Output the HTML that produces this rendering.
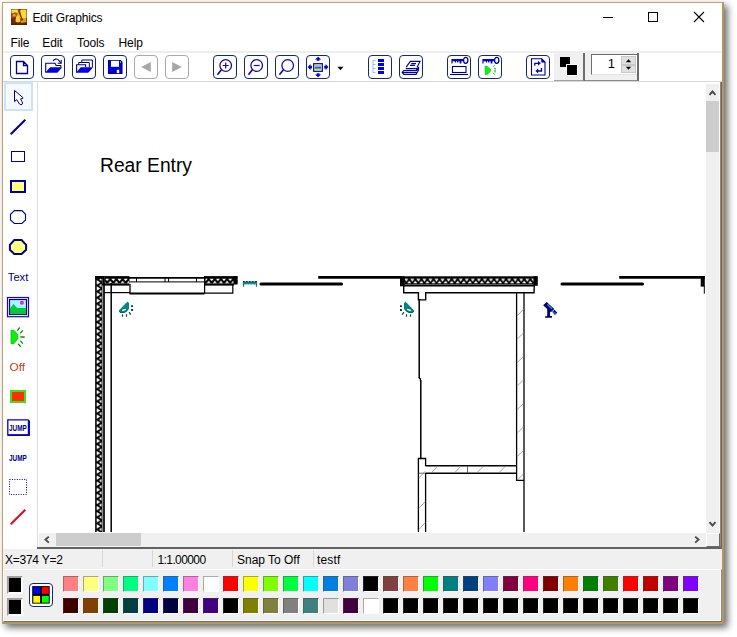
<!DOCTYPE html>
<html>
<head>
<meta charset="utf-8">
<title>Edit Graphics</title>
<style>
*{box-sizing:border-box;margin:0;padding:0}
html,body{width:737px;height:637px;background:#fff;overflow:hidden}
body{font-family:"Liberation Sans",sans-serif;font-size:12px;color:#000;position:relative}
.abs{position:absolute}
#win{position:absolute;left:2px;top:2px;width:722px;height:622px;border:1px solid #c9a06a;border-right:2px solid #b8955f;border-bottom:2px solid #b8955f;background:#fff;box-shadow:3px 3px 7px 0.5px rgba(0,0,0,.6)}
/* coordinates inside #inner are page coordinates */
#inner{position:absolute;left:-3px;top:-3px;width:737px;height:637px}
.title{left:32.5px;top:11px;font-size:12px;line-height:15px;letter-spacing:-.16px;white-space:nowrap}
.menu{top:36px;font-size:12px;line-height:15px;white-space:nowrap;letter-spacing:-.1px}
.tb{position:absolute;top:55px;width:24px;height:24px;border:1px solid #14296b;border-radius:4px;background:#fff}
.tb.dis{border-color:#a9a9a9}
.tb svg{position:absolute;left:-1px;top:-1px}
.hl{position:absolute;background:#e3e3e3;height:1px;z-index:2}
.tool{position:absolute;left:4px;width:29px;height:29px}
.st{position:absolute;top:553px;font-size:12px;line-height:15px;white-space:nowrap;letter-spacing:-.25px}
.sep{position:absolute;top:550px;width:1px;height:17px;background:#d7d7d7}
.sw{position:absolute;width:16px;height:16px;border:1px solid;border-color:rgba(70,70,70,.45) #fff #fff rgba(70,70,70,.45)}
</style>
</head>
<body>
<div id="win"><div id="inner">

<!-- TITLE BAR -->
<svg class="abs" style="left:11px;top:9px" width="16" height="16" viewBox="0 0 16 16">
<defs><filter id="ib" x="-20%" y="-20%" width="140%" height="140%"><feGaussianBlur stdDeviation=".55"/></filter>
<clipPath id="ic"><rect width="16" height="16"/></clipPath></defs>
<rect width="16" height="16" fill="#7a3400"/>
<g clip-path="url(#ic)"><g filter="url(#ib)">
<rect x="0" y="0" width="16" height="9" fill="#e8a820"/>
<path d="M0 0h6.500l1 2.500-3 1.500-4.500 1z" fill="#ffdc40"/>
<path d="M9.300 1.200l5.700-.7 1 8-2.500 3.500-3.300-4z" fill="#ffd838"/>
<path d="M0 4.500l4-1.200 3 1.200-2.500 5-4.500 1z" fill="#a85a08"/>
<circle cx="3.200" cy="6.300" r="1.300" fill="#f29a3c"/>
<path d="M0 9.500l4.500-1.500 1 3 1.500 2.500-7 2.500z" fill="#6e2c00"/>
<path d="M4.800 12.800c-.8-2.500.8-5.500 2-6.800 1.200 1.800 2.600 3.500 2.600 6 0 1-3.600 1.800-4.600.8z" fill="#ffd232"/>
<path d="M9.500 10l5.500-1 1 4-6 1z" fill="#e09a24"/>
<path d="M6.800 1.200l2 .3 2.600 8.200-1.300.6z" fill="#7c3c04"/>
<path d="M6.500 3.200l3 6.300" stroke="#f6b03c" stroke-width="1" fill="none"/>
<path d="M7.500 0h2v1.600h-2z" fill="#6a3000"/>
<path d="M9.500 11l1.500-2 1.500 1.200-1.500 1.800z" fill="#7a3a04"/>
<path d="M0 14.200h16v2h-16z" fill="#5e2400"/>
</g></g>
<rect x=".25" y=".25" width="15.500" height="15.500" fill="none" stroke="#4e2000" stroke-width=".5" opacity=".8"/>
</svg>
<div class="abs title">Edit Graphics</div>
<div class="abs" style="left:603px;top:17px;width:10px;height:1px;background:#000"></div>
<div class="abs" style="left:648px;top:12px;width:10px;height:10px;border:1px solid #000"></div>
<svg class="abs" style="left:693px;top:11px" width="12" height="12" viewBox="0 0 12 12"><path d="M1 1l10 10M11 1L1 11" stroke="#000" stroke-width="1.1" fill="none"/></svg>

<!-- MENU BAR -->
<div class="abs menu" style="left:10.5px">File</div>
<div class="abs menu" style="left:42.3px">Edit</div>
<div class="abs menu" style="left:77px">Tools</div>
<div class="abs menu" style="left:118.5px">Help</div>
<div class="hl" style="left:3px;top:51px;width:719px;height:2px;background:#eeeeee"></div>
<div class="hl" style="left:3px;top:81px;width:719px;background:#d8d8d8"></div>

<!--TOOLBAR-->
<div class="tb" style="left:10px"><svg width="24" height="24" viewBox="0 0 24 24"><path d="M6.5 6.5h7l4 4v8h-11z M13.5 6.5v4h4" fill="#fff" stroke="#00008a" stroke-width="1.3" stroke-linejoin="miter"/></svg></div>
<div class="tb" style="left:41px"><svg width="24" height="24" viewBox="0 0 24 24">
<path d="M4.700 17.500v-9.300h9.300l1.200 2.300h4.600v1.700" fill="none" stroke="#00008a" stroke-width="1.100"/>
<path d="M4.200 17.800l4.900-5.600h12.100l-4.800 5.600z" fill="#0000e6"/>
<path d="M12 6c1.200-2.300 4.300-2.600 5.800-.6l2 2.600" fill="none" stroke="#00008a" stroke-width="1.100"/><path d="M16.800 8.300h3.400v-3.400" fill="none" stroke="#00008a" stroke-width="1.100"/></svg></div>
<div class="tb" style="left:72px"><svg width="24" height="24" viewBox="0 0 24 24">
<path d="M9.800 7.500v-2.500h10.600v7" fill="none" stroke="#00008a" stroke-width="1"/>
<path d="M6.700 9.800v-2.300h10.600v4.700" fill="none" stroke="#00008a" stroke-width="1"/>
<path d="M4.600 17.500v-7.700h9v2.400" fill="none" stroke="#00008a" stroke-width="1.100"/>
<path d="M4 17.800l4.700-5.600h12.500l-5 5.600z" fill="#0000e6"/></svg></div>
<div class="tb" style="left:103px"><svg width="24" height="24" viewBox="0 0 24 24">
<path d="M5.500 5.500h12l1.500 1.500v11.500h-13.500z" fill="#0000e6" stroke="#00008a" stroke-width="1.100"/>
<rect x="8" y="5.800" width="8" height="6" fill="#fff"/><rect x="8.500" y="14" width="8" height="4.300" fill="#0000c8"/><rect x="13.800" y="14.800" width="2.400" height="3.300" fill="#fff"/><rect x="17" y="6.600" width="1" height="1" fill="#fff"/></svg></div>
<div class="tb dis" style="left:134px"><svg width="24" height="24" viewBox="0 0 24 24"><path d="M16.800 7v10l-9.600-5z" fill="#a6a6a6"/></svg></div>
<div class="tb dis" style="left:165px"><svg width="24" height="24" viewBox="0 0 24 24"><path d="M7.200 7v10l9.600-5z" fill="#a6a6a6"/></svg></div>

<div class="tb" style="left:213px"><svg width="24" height="24" viewBox="0 0 24 24"><circle cx="12.700" cy="10.500" r="5.800" fill="#fff" stroke="#1c0a9c" stroke-width="1.300"/><path d="M8.400 14.800l-4 5" stroke="#1c0a9c" stroke-width="1.700" fill="none"/><path d="M9.700 10.500h6M12.700 7.500v6" stroke="#1c0a9c" stroke-width="1.200"/></svg></div>
<div class="tb" style="left:244px"><svg width="24" height="24" viewBox="0 0 24 24"><circle cx="12.700" cy="10.500" r="5.800" fill="#fff" stroke="#1c0a9c" stroke-width="1.300"/><path d="M8.400 14.800l-4 5" stroke="#1c0a9c" stroke-width="1.700" fill="none"/><path d="M9.700 10.500h6" stroke="#1c0a9c" stroke-width="1.200"/></svg></div>
<div class="tb" style="left:275px"><svg width="24" height="24" viewBox="0 0 24 24"><circle cx="12.700" cy="10.500" r="5.800" fill="#fff" stroke="#1c0a9c" stroke-width="1.300"/><path d="M8.400 14.800l-4 5" stroke="#1c0a9c" stroke-width="1.700" fill="none"/></svg></div>
<div class="tb" style="left:306px"><svg width="24" height="24" viewBox="0 0 24 24">
<rect x="7.700" y="8.700" width="8.600" height="7.600" fill="#fff" stroke="#00007c" stroke-width="1.200"/>
<rect x="8.800" y="10.100" width="6.300" height=".8" fill="#f08098"/><rect x="8.800" y="10.900" width="6.300" height=".9" fill="#b8b8e8"/><rect x="8.800" y="11.700" width="6.300" height="1.100" fill="#0868e0"/><rect x="8.800" y="12.700" width="6.300" height=".7" fill="#083060"/><rect x="8.800" y="13.300" width="6.300" height=".9" fill="#20b030"/><rect x="8.800" y="14.100" width="6.300" height=".8" fill="#98f088"/>
<path d="M12.100 1.700l3.100 2.800h-1.700v1.300h-2.800v-1.300h-1.700z M12.100 22.300l3.100-2.800h-1.700v-1.300h-2.800v1.300h-1.700z M1.700 12.100l2.800-3.100v1.700h1.400v2.800h-1.400v1.700z M22.400 12.100l-2.800-3.100v1.700h-1.400v2.800h1.400v1.700z" fill="#0000e6"/></svg></div>
<svg class="abs" style="left:337px;top:66px" width="8" height="5" viewBox="0 0 8 5"><path d="M.5.800h6l-3 3.400z" fill="#000"/></svg>

<div class="tb" style="left:368px"><svg width="24" height="24" viewBox="0 0 24 24">
<path d="M7.500 5.500h-2.500v12h2.500M5 9.500h2.500M5 13.500h2.500" fill="none" stroke="#9cc0e8" stroke-width="1"/>
<path d="M10 4h6v3h-6z M10 8h6v3h-6z M10 12h6v3h-6z M10 16h6v3h-6z" fill="#0000e6"/></svg></div>
<div class="tb" style="left:399px"><svg width="24" height="24" viewBox="0 0 24 24"><g fill="none" stroke="#0000a4" stroke-width="1.200">
<path d="M7.200 12.200l4.100-5.800h9.700l-3 6.200"/><path d="M12.300 8.600h4.700M11 10.300h4.800"/>
<path d="M6.800 13.700h10.800v2"/>
<path d="M17.600 15.700h-12.800l-1.600 1.600 1.600 2.200h12.200l2.500-4.300v-3.200l-1.900 3.700M3.600 17.600h14"/></g></svg></div>

<div class="tb" style="left:447px"><svg width="24" height="24" viewBox="0 0 24 24">
<path d="M4.400 4.100h12.400v2.200h-2.400v2.100h-1.800v-2.100h-1.300v1.200h-1.300v-1.200h-1v1.200h-1.200v-1.200h-2.200v2.300h-1.200z" fill="#0000d8"/>
<ellipse cx="18.700" cy="5.300" rx="2.150" ry="3" fill="#fff" stroke="#00008a" stroke-width="1.300"/>
<rect x="5.500" y="11.500" width="13.500" height="6" fill="#fff" stroke="#00008a" stroke-width="1.100"/><path d="M3 19.500h18" stroke="#00008a" stroke-width="1.100"/></svg></div>
<div class="tb" style="left:478px"><svg width="24" height="24" viewBox="0 0 24 24">
<path d="M4.400 4.100h12.400v2.200h-2.400v2.100h-1.800v-2.100h-1.300v1.200h-1.300v-1.200h-1v1.200h-1.200v-1.200h-2.200v2.300h-1.200z" fill="#0000d8"/>
<ellipse cx="18.700" cy="5.300" rx="2.150" ry="3" fill="#fff" stroke="#00008a" stroke-width="1.300"/>
<path d="M7 11.100h2l3.700 3.400v1.800l-3.700 3.400h-2z" fill="#10f018" stroke="#18c020" stroke-width=".5"/>
<path d="M14.800 12l2.100-2M14.800 18l2.100 1.700M16 13.400h2M16 15.100h2M16 16.800h2" stroke="#28c830" stroke-width="1" fill="none"/></svg></div>

<div class="tb" style="left:526px"><svg width="24" height="24" viewBox="0 0 24 24">
<path d="M5.500 3.800h10.200l3.300 3.300v12.900h-13.500z" fill="#fff" stroke="#00008a" stroke-width="1.100"/><path d="M15.600 3.800v3.400h3.400z" fill="#0000c8" stroke="#00008a" stroke-width=".6"/>
<path d="M8.800 10.800v-2.500h3.500" fill="none" stroke="#0000c0" stroke-width="1.300"/><path d="M12 5.800l2.800 2.500-2.800 2.500z" fill="#0000c0"/>
<path d="M15.500 13v3h-3.500" fill="none" stroke="#0000c0" stroke-width="1.300"/><path d="M12.200 13.500l-2.800 2.500 2.800 2.500z" fill="#0000c0"/></svg></div>

<!-- colour box + spinner -->
<div class="abs" style="left:554px;top:53px;width:31px;height:29px;background:#f0f0f0;border-right:2px solid #6d6d6d;border-bottom:2px solid #a0a0a0"></div>
<div class="abs" style="left:560px;top:57px;width:10px;height:10px;background:#000"></div>
<div class="abs" style="left:566px;top:64px;width:12px;height:12px;background:#000;border:1px solid #fafafa"></div>
<div class="abs" style="left:585px;top:53px;width:54px;height:29px;background:#f0f0f0;border-right:2px solid #6d6d6d;border-bottom:2px solid #8a8a8a"></div>
<div class="abs" style="left:591px;top:54px;width:46px;height:21px;background:#fff;border-top:1px solid #6d6d6d;border-left:1px solid #6d6d6d;border-bottom:1px solid #e3e3e3"></div>
<div class="abs" style="left:600px;top:57px;width:15px;text-align:right;font-size:13px;line-height:14px">1</div>
<div class="abs" style="left:621px;top:56px;width:15px;height:9px;background:#e1e1e1;border:1px solid #c8c8c8"></div>
<div class="abs" style="left:621px;top:65px;width:15px;height:8px;background:#e1e1e1;border:1px solid #c8c8c8"></div>
<svg class="abs" style="left:625px;top:58px" width="8" height="13" viewBox="0 0 8 13"><path d="M.8 4.300l2.700-3 2.700 3z M.8 8.800l2.700 3 2.700-3z" fill="#000"/></svg>
<!--MAIN-->
<!-- left tool palette -->
<div class="abs" style="left:37px;top:82px;width:1px;height:466px;background:#dcdcdc"></div>
<div class="tool" style="top:82px;background:#f5faff;border:2px solid #cce4f9"></div>
<svg class="abs" style="left:3px;top:82px" width="34" height="466" viewBox="3 82 34 466">
<!-- 1 select arrow -->
<path d="M14.500 90.400V101.600L16.800 99.700L19.500 104Q21 105.500 22.200 104.200Q22.900 103.200 22.100 101.800L20.600 98.900L22.900 98.300V97.600Z" fill="#fff" stroke="#00008a" stroke-width="1" stroke-linejoin="miter"/>
<!-- 2 line -->
<path d="M10.700 134.300l14.600-14.600" stroke="#00008a" stroke-width="2"/>
<!-- 3 rect -->
<rect x="11.500" y="151.500" width="13" height="10" fill="#fff" stroke="#00008a" stroke-width="1"/>
<!-- 4 filled rect -->
<rect x="11" y="181" width="14" height="11" fill="#ffff80" stroke="#0000a0" stroke-width="2"/>
<!-- 5 octagon -->
<path d="M14.400 210.600H21.900L25.500 214.300V220L21.900 223.500H14.400L10.500 220V214.300Z" fill="#fff" stroke="#00008a" stroke-width="1.100"/>
<!-- 6 filled octagon -->
<path d="M14.300 240H21.600L26.100 244.800V249.800L21.600 254H14.300L9.900 249.800V244.800Z" fill="#ffff80" stroke="#00008a" stroke-width="2"/>
<!-- 8 picture -->
<rect x="7.500" y="297.500" width="21" height="19.200" fill="#fff" stroke="#1c0a9c" stroke-width="1.200"/>
<rect x="9.500" y="299.500" width="17" height="15" fill="#a4f8ff" stroke="#00008a" stroke-width="1.200"/>
<path d="M10 314.200v-5.800l3.400-4.500 3.700 4.100h9v6.200z" fill="#08c83c"/><circle cx="21.900" cy="302.800" r="2" fill="#e024e0"/>
<!-- 9 lamp -->
<path d="M11 330.200h2.900l4 4.400v4l-4 5.100h-2.900z" fill="#0cf00c" stroke="#00b400" stroke-width=".7"/>
<path d="M17.300 330.600l2.500-3.100M20.300 333.400l2.500-3M20.300 337h4.400M20.300 340.600l2.500 3M18.100 343.700l2.600 3" stroke="#009400" stroke-width="1.300" fill="none"/>
<!-- 11 green/red rect -->
<rect x="11" y="391" width="14" height="11" fill="#ff3000" stroke="#40e020" stroke-width="2"/>
<!-- 12 jump box -->
<path d="M7.800 419.800h20.300l1.200 1.200v14.200h-21.500z" fill="#fff" stroke="#0000c8" stroke-width="1.300"/><path d="M28.700 421v14.200h-20.500" fill="none" stroke="#0000c8" stroke-width="1.800"/>
<!-- 14 dotted rect -->
<rect x="9.500" y="479.500" width="17" height="15" fill="none" stroke="#00008a" stroke-width="1" stroke-dasharray="1 1.450"/>
<!-- 15 red line -->
<path d="M10.700 524.300l14.600-14.600" stroke="#d01020" stroke-width="2"/>
<text x="7.800" y="281" font-family="Liberation Sans, sans-serif" font-size="11.500" fill="#00008a" textLength="20.500" lengthAdjust="spacingAndGlyphs">Text</text>
<text x="9.500" y="371" font-family="Liberation Sans, sans-serif" font-size="11.500" fill="#b8401c" textLength="15.500" lengthAdjust="spacingAndGlyphs">Off</text>
<text x="9" y="431" font-family="Liberation Sans, sans-serif" font-size="9.500" font-weight="bold" fill="#000088" textLength="17.700" lengthAdjust="spacingAndGlyphs">JUMP</text>
<text x="9" y="461.200" font-family="Liberation Sans, sans-serif" font-size="9.500" font-weight="bold" fill="#000088" textLength="17.700" lengthAdjust="spacingAndGlyphs">JUMP</text>
</svg>

<!-- canvas -->
<svg class="abs" style="left:38px;top:82px" width="668" height="450" viewBox="38 82 668 450" id="cv">
<defs>
<pattern id="hx" x="104.100" y="276.100" width="6.150" height="7.700" patternUnits="userSpaceOnUse"><rect width="6.150" height="7.700" fill="#000"/><path d="M1 2.550h4.150l-2.075 2.600z M-1.900 7.050l1.900-2.450 1.900 2.450z M4.250 7.050l1.900-2.450 1.900 2.450z" fill="#fff"/></pattern>
<pattern id="hm" x="403.250" y="276.300" width="6.050" height="8" patternUnits="userSpaceOnUse"><rect width="6.050" height="8" fill="#000"/><path d="M.9 2.550h4.250l-2.125 2.650z M-2.100 6.900l2.100-2.450 2.100 2.450z M3.950 6.900l2.100-2.450 2.100 2.450z" fill="#fff"/></pattern>
<pattern id="vx" x="95.150" y="297.650" width="7.300" height="6.100" patternUnits="userSpaceOnUse"><rect width="7.300" height="6.100" fill="#000"/><path d="M1.550 .95v4.200l3.550-2.100z M6.350 -1.800l-2.450 1.800 2.450 1.800z M6.350 4.300l-2.450 1.800 2.450 1.800z" fill="#fff"/></pattern>
</defs>
<rect x="38" y="82" width="668" height="450" fill="#fff"/>
<text x="100" y="172" font-family="Liberation Sans, sans-serif" font-size="19.600" fill="#000" textLength="92" lengthAdjust="spacingAndGlyphs">Rear Entry</text>
<!-- left wall -->
<rect x="95.150" y="276.100" width="7.300" height="256" fill="url(#vx)"/>
<rect x="104.800" y="276.100" width="24.700" height="7.700" fill="url(#hx)"/>
<path d="M95.150 276.100h9.700v8h-2.400v-5.300h-7.300z" fill="#000"/>
<path d="M104 283v249" stroke="#000" stroke-width="1.700" fill="none"/>
<path d="M111.200 283v249" stroke="#000" stroke-width="1.500" fill="none"/>
<path d="M102 284.800h27.500" stroke="#000" stroke-width="1.600" fill="none"/>
<path d="M104 292.600h26" stroke="#000" stroke-width="1.200" fill="none"/>
<path d="M130 284v9.500" stroke="#000" stroke-width="1.300" fill="none"/>
<!-- window -->
<path d="M129 277.900h75.500" stroke="#000" stroke-width="1.600" fill="none"/>
<path d="M129 281.900h75.500M136.500 278v4M165 278v4M168.600 278v4M196.500 278v4" stroke="#000" stroke-width="1" fill="none"/>
<path d="M129.500 293.400h75" stroke="#000" stroke-width="2" fill="none"/>
<rect x="204" y="276.100" width="33.500" height="7.700" fill="url(#hx)"/>
<rect x="233.500" y="276.100" width="4" height="8.400" fill="#000"/><rect x="204" y="276.100" width="1.500" height="8" fill="#000"/>
<path d="M204 284.800h30" stroke="#000" stroke-width="1.600"/>
<path d="M204.600 284v9.100h28.200v-9" stroke="#000" stroke-width="1.200" fill="none"/>
<!-- teal spring -->
<path d="M243.500 281.300v5.400M256.500 281.300v5.400" stroke="#007878" stroke-width="1.200" fill="none"/>
<path d="M243 282.600h14" stroke="#008686" stroke-width="2.200" fill="none"/><path d="M244.300 283.600h12" stroke="#008686" stroke-width="2" stroke-dasharray="2.200 .8" fill="none"/>
<path d="M243 281.700h14" stroke="#001818" stroke-width="1" stroke-dasharray="1.700 1.300" fill="none"/>
<!-- thick lines -->
<path d="M261 284h80.500M562 284h80.500" stroke="#000" stroke-width="3.100" stroke-linecap="round"/>
<path d="M318.200 277.400h83M619.200 277.400h85.600" stroke="#000" stroke-width="2.600"/>
<rect x="700.700" y="276.200" width="4.100" height="10.400" fill="#000"/><rect x="703.800" y="286" width="1" height="7.700" fill="#000"/>
<!-- mid wall -->
<rect x="400" y="276.300" width="137.500" height="8" fill="url(#hm)"/>
<rect x="400" y="276.300" width="4.700" height="10" fill="#000"/><rect x="533.500" y="276.300" width="4.200" height="9.500" fill="#000"/>
<path d="M403 285.450h131" stroke="#000" stroke-width="1.900"/>
<path d="M403.700 285v7.800h14.700v7.100h7.300v-7.100h108.300l.3-7.800" stroke="#000" stroke-width="1.400" fill="none"/>
<path d="M419.200 299v79M420.800 380v79" stroke="#000" stroke-width="1.500"/>
<path d="M418.300 299.500h2.200" stroke="#000" stroke-width="1" fill="none"/><path d="M418.700 377.500l1.800 1.500-.5 1.500" stroke="#000" stroke-width="1.300" fill="none"/>
<path d="M516.600 292.500v173M524 292.500v239.500" stroke="#000" stroke-width="1.300"/>
<path d="M516.600 465.500v14.900h7.400" stroke="#000" stroke-width="1.300" fill="none"/>
<path d="M425.500 465.700h91M425.500 473.200h91" stroke="#000" stroke-width="1.400"/>
<path d="M418.400 532v-73.500h7.200v7.500M425.600 473.200v59" stroke="#000" stroke-width="1.300" fill="none"/>
<path d="M418.500 473.200h7M467.500 466v7" stroke="#444" stroke-width=".8"/>
<g stroke="#8a8a8a" stroke-width=".75" fill="none"><path d="M517.200 315.6l6.300-6.200M517.200 339.1l6.300-6.200M517.200 362.6l6.300-6.200M517.200 386.1l6.300-6.200M517.200 409.6l6.300-6.200M517.200 433.1l6.300-6.200M517.200 456.6l6.300-6.200M517.200 480.1l6.300-6.200"/><path d="M431.3 472.800l6.500-6.700M454.5 472.800l6.500-6.700M477 472.800l6.500-6.700M499 472.800l6.500-6.700"/><path d="M418.800 478l6.400-6.800M418.800 508.4l6.400-6.800M418.800 529.5l6.400-6.800"/></g>
<!-- lamps -->
<g><path d="M127.400 301.700l1.600 1.200v6l-1.700 1.800-2.700 1.900h-4.600l-1.200-2.200z" fill="#008484"/><path d="M119.200 311.200l.8 1.200h4.600l2.700-1.900" fill="none" stroke="#005a40" stroke-width="1"/><path d="M122.200 310.500l3.700-1.100" stroke="#fff" stroke-width="1.400"/>
<path d="M122.500 314.200v2.500M126.500 314.200v2.500M129.100 312.100l1.700 2.500" stroke="#00503c" stroke-width="1.200"/><path d="M131.100 305.200h1.900v1.900h-1.900z M131.100 309h1.900v1.900h-1.900z" fill="#00402c"/></g>
<g transform="translate(533,0) scale(-1,1)"><path d="M127.400 301.700l1.600 1.200v6l-1.700 1.800-2.700 1.900h-4.600l-1.200-2.200z" fill="#008484"/><path d="M119.200 311.200l.8 1.200h4.600l2.700-1.900" fill="none" stroke="#005a40" stroke-width="1"/><path d="M122.200 310.500l3.700-1.100" stroke="#fff" stroke-width="1.400"/>
<path d="M122.500 314.200v2.500M126.500 314.200v2.500M129.100 312.100l1.700 2.500" stroke="#00503c" stroke-width="1.200"/><path d="M131.100 305.200h1.900v1.900h-1.900z M131.100 309h1.900v1.900h-1.900z" fill="#00402c"/></g>
<!-- camera -->
<g><path d="M546.700 301.900l7.600 7-3.500 3.400-7.700-7z" fill="#00007c"/><path d="M547.400 304.200l4.600 4.500" stroke="#2c88c0" stroke-width="1.500"/>
<path d="M547.200 309h2.800v7h2v1.800h-7v-1.200l2.200-.6z" fill="#00007c"/><path d="M552.200 311.700l2.300-2 2.800 3-2.500 2.300z" fill="#000068"/><path d="M553.300 311.600l2.800 2.700" stroke="#2c86a8" stroke-width="1.200"/></g>
</svg>

<!-- scrollbars -->
<div class="abs" style="left:706px;top:84px;width:13px;height:449px;background:#f0f0f0"></div>
<div class="abs" style="left:706px;top:101px;width:13px;height:51px;background:#cdcdcd"></div>
<svg class="abs" style="left:706px;top:88px" width="13" height="10" viewBox="0 0 13 10"><path d="M3.500 6.800l3-3.300 3 3.300" fill="none" stroke="#4a4a4a" stroke-width="1.900"/></svg>
<svg class="abs" style="left:706px;top:519px" width="13" height="10" viewBox="0 0 13 10"><path d="M3.500 3.200l3 3.300 3-3.300" fill="none" stroke="#4a4a4a" stroke-width="1.900"/></svg>
<div class="abs" style="left:39px;top:533px;width:667px;height:14px;background:#f0f0f0"></div>
<div class="abs" style="left:56px;top:533px;width:85px;height:13px;background:#cdcdcd"></div>
<svg class="abs" style="left:42px;top:533px" width="10" height="13" viewBox="0 0 10 13"><path d="M6.800 3.600l-3.300 3 3.300 3" fill="none" stroke="#4a4a4a" stroke-width="1.900"/></svg>
<svg class="abs" style="left:692px;top:533px" width="10" height="13" viewBox="0 0 10 13"><path d="M3.200 3.600l3.300 3-3.300 3" fill="none" stroke="#4a4a4a" stroke-width="1.900"/></svg>
<div class="abs" style="left:706px;top:533px;width:14px;height:14px;background:#f0f0f0;border-top:1px solid #fff;border-left:1px solid #fff;border-right:1px solid #696969;border-bottom:1px solid #696969"></div>
<div class="abs" style="left:719px;top:82px;width:1px;height:451px;background:#fafafa"></div>
<div class="abs" style="left:720px;top:82px;width:1px;height:466px;background:#8a8a8a"></div>
<div class="abs" style="left:721px;top:82px;width:1px;height:467px;background:#6e675c"></div>
<div class="abs" style="left:37px;top:547px;width:684px;height:2px;background:#626262"></div>
<!--STATUS-->
<div class="abs" style="left:3px;top:549px;width:719px;height:20px;background:#f0f0f0"></div>
<div class="st" style="left:5px">X=374 Y=2</div>
<div class="st" style="left:157.500px;letter-spacing:-.6px">1:1.00000</div>
<div class="st" style="left:237px;letter-spacing:-.02px">Snap To Off</div>
<div class="st" style="left:317px;letter-spacing:.15px">testf</div>
<div class="sep" style="left:102px"></div>
<div class="sep" style="left:152px"></div>
<div class="sep" style="left:232px"></div>
<div class="sep" style="left:313px"></div>
<!--PALETTE-->
<div class="abs" style="left:3px;top:569px;width:719px;height:53px;background:#f0f0f0;border-top:1px solid #fff;border-left:1px solid #fff;border-right:1px solid #8a8a8a;border-bottom:1px solid #707070"></div>
<div class="abs" style="left:720px;top:571px;width:1px;height:50px;background:#fff"></div>
<div class="abs" style="left:3px;top:620px;width:718px;height:1px;background:#fff"></div>
<div class="abs" style="left:7px;top:576px;width:16px;height:18px;background:#000;border-top:2px solid #a0a0a0;border-left:2px solid #a0a0a0;border-right:2px solid #fff;border-bottom:2px solid #fff"></div>
<div class="abs" style="left:7px;top:598px;width:16px;height:18px;background:#000;border-top:2px solid #a0a0a0;border-left:2px solid #a0a0a0;border-right:2px solid #fff;border-bottom:2px solid #fff"></div>
<div class="abs" style="left:29px;top:583px;width:24px;height:24px;border:1px solid #14296b;border-radius:4px;background:#fff"></div>
<svg class="abs" style="left:29px;top:583px" width="24" height="24" viewBox="0 0 24 24"><rect x="3.200" y="3.100" width="17.500" height="17.500" fill="#000"/><rect x="4.300" y="4.100" width="6.800" height="6.700" fill="#0000ff"/><rect x="13" y="4.100" width="6.800" height="6.700" fill="#ff0000"/><rect x="4.300" y="12.900" width="6.800" height="6.800" fill="#ffff00"/><rect x="13" y="12.900" width="6.800" height="6.800" fill="#00ff00"/></svg>
<div class="sw" style="left:63px;top:576px;background:#ff8080"></div>
<div class="sw" style="left:83px;top:576px;background:#ffff80"></div>
<div class="sw" style="left:103px;top:576px;background:#80ff80"></div>
<div class="sw" style="left:123px;top:576px;background:#00ff80"></div>
<div class="sw" style="left:143px;top:576px;background:#80ffff"></div>
<div class="sw" style="left:163px;top:576px;background:#0080ff"></div>
<div class="sw" style="left:183px;top:576px;background:#ff80e0"></div>
<div class="sw" style="left:203px;top:576px;background:#ffffff"></div>
<div class="sw" style="left:223px;top:576px;background:#ff0000"></div>
<div class="sw" style="left:243px;top:576px;background:#ffff00"></div>
<div class="sw" style="left:263px;top:576px;background:#80ff00"></div>
<div class="sw" style="left:283px;top:576px;background:#00ff40"></div>
<div class="sw" style="left:303px;top:576px;background:#00ffff"></div>
<div class="sw" style="left:323px;top:576px;background:#0080e0"></div>
<div class="sw" style="left:343px;top:576px;background:#8080dc"></div>
<div class="sw" style="left:363px;top:576px;background:#000000"></div>
<div class="sw" style="left:383px;top:576px;background:#804040"></div>
<div class="sw" style="left:403px;top:576px;background:#ff8040"></div>
<div class="sw" style="left:423px;top:576px;background:#00ff00"></div>
<div class="sw" style="left:443px;top:576px;background:#008080"></div>
<div class="sw" style="left:463px;top:576px;background:#004080"></div>
<div class="sw" style="left:483px;top:576px;background:#8080ff"></div>
<div class="sw" style="left:503px;top:576px;background:#800040"></div>
<div class="sw" style="left:523px;top:576px;background:#ff0080"></div>
<div class="sw" style="left:543px;top:576px;background:#800000"></div>
<div class="sw" style="left:563px;top:576px;background:#ff8000"></div>
<div class="sw" style="left:583px;top:576px;background:#008000"></div>
<div class="sw" style="left:603px;top:576px;background:#408000"></div>
<div class="sw" style="left:623px;top:576px;background:#ff0000"></div>
<div class="sw" style="left:643px;top:576px;background:#c00000"></div>
<div class="sw" style="left:663px;top:576px;background:#800080"></div>
<div class="sw" style="left:683px;top:576px;background:#8000ff"></div>
<div class="sw" style="left:63px;top:598px;background:#400000"></div>
<div class="sw" style="left:83px;top:598px;background:#804000"></div>
<div class="sw" style="left:103px;top:598px;background:#004000"></div>
<div class="sw" style="left:123px;top:598px;background:#004040"></div>
<div class="sw" style="left:143px;top:598px;background:#000080"></div>
<div class="sw" style="left:163px;top:598px;background:#000040"></div>
<div class="sw" style="left:183px;top:598px;background:#400040"></div>
<div class="sw" style="left:203px;top:598px;background:#400080"></div>
<div class="sw" style="left:223px;top:598px;background:#000000"></div>
<div class="sw" style="left:243px;top:598px;background:#808000"></div>
<div class="sw" style="left:263px;top:598px;background:#808040"></div>
<div class="sw" style="left:283px;top:598px;background:#808080"></div>
<div class="sw" style="left:303px;top:598px;background:#408080"></div>
<div class="sw" style="left:323px;top:598px;background:#e0e0e0"></div>
<div class="sw" style="left:343px;top:598px;background:#400040"></div>
<div class="sw" style="left:363px;top:598px;background:#ffffff"></div>
<div class="sw" style="left:383px;top:598px;background:#000000"></div>
<div class="sw" style="left:403px;top:598px;background:#000000"></div>
<div class="sw" style="left:423px;top:598px;background:#000000"></div>
<div class="sw" style="left:443px;top:598px;background:#000000"></div>
<div class="sw" style="left:463px;top:598px;background:#000000"></div>
<div class="sw" style="left:483px;top:598px;background:#000000"></div>
<div class="sw" style="left:503px;top:598px;background:#000000"></div>
<div class="sw" style="left:523px;top:598px;background:#000000"></div>
<div class="sw" style="left:543px;top:598px;background:#000000"></div>
<div class="sw" style="left:563px;top:598px;background:#000000"></div>
<div class="sw" style="left:583px;top:598px;background:#000000"></div>
<div class="sw" style="left:603px;top:598px;background:#000000"></div>
<div class="sw" style="left:623px;top:598px;background:#000000"></div>
<div class="sw" style="left:643px;top:598px;background:#000000"></div>
<div class="sw" style="left:663px;top:598px;background:#000000"></div>
<div class="sw" style="left:683px;top:598px;background:#000000"></div>

</div></div>
</body>
</html>
